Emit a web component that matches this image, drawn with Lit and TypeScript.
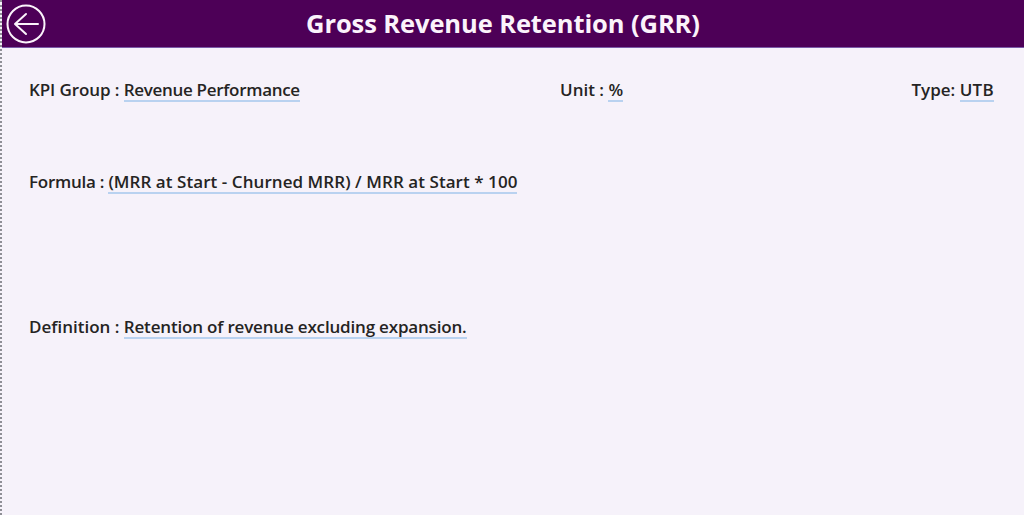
import { LitElement, html, css } from "lit";
import { customElement } from "lit/decorators.js";

@customElement("app-root")
export class AppRoot extends LitElement {
  static styles = css`
    :host {
      display: block;
      width: 1024px;
      height: 515px;
      overflow: hidden;
      font-family: "Open Sans", "Noto Sans", sans-serif;
      color: #252423;
      background: #f6f2fa;
    }
    .page {
      height: 515px;
      display: flex;
      flex-direction: column;
      border-left: 2px dotted #8f8f96;
      box-sizing: border-box;
    }
    .bar {
      height: 48px;
      box-sizing: border-box;
      background: #4d0057;
      border-bottom: 1px solid #7a5aa8;
      display: grid;
      grid-template-columns: 44px 1fr 44px;
      align-items: center;
      padding-left: 4px;
    }
    .back {
      width: 40px;
      height: 40px;
      display: block;
    }
    h1 {
      margin: 0;
      font-size: 25.5px;
      font-weight: 700;
      color: #fbf3fb;
      text-align: center;
      letter-spacing: -0.1px;
      padding-right: 24px;
      padding-bottom: 1px;
    }
    .body {
      flex: 1;
      padding: 31px 30px 0 27px;
      display: flex;
      flex-direction: column;
      font-size: 17px;
      font-weight: 600;
    }
    .row {
      display: grid;
      grid-template-columns: 531px 1fr auto;
      line-height: 21px;
      height: 23px;
    }
    .row.single { display: block; }
    .row.formula { margin-top: 69px; }
    .row.definition { margin-top: 122px; }
    .item { white-space: nowrap; }
    .val {
      display: inline-block;
      border-bottom: 2px solid #b9d2f0;
    }
    .kpi { letter-spacing: -0.1px; }
    .flabel { letter-spacing: -0.25px; }
    .group { letter-spacing: -0.3px; }
    .form { letter-spacing: 0.06px; }
    .def { letter-spacing: -0.18px; }
    .type { letter-spacing: 0.3px; }
  `;

  render() {
    return html`
      <div class="page">
        <header class="bar">
          <svg class="back" viewBox="0 0 40 40" fill="none" stroke="#fbf3fb" stroke-width="2" stroke-linecap="round" stroke-linejoin="round">
            <circle cx="20" cy="20" r="18.5"></circle>
            <path d="M9 20H32M20 10 9 20 20 30"></path>
          </svg>
          <h1>Gross Revenue Retention (GRR)</h1>
          <span></span>
        </header>
        <main class="body">
          <div class="row">
            <span class="item"><span class="kpi">KPI Group : </span><span class="val group">Revenue Performance</span></span>
            <span class="item">Unit : <span class="val">%</span></span>
            <span class="item">Type: <span class="val type">UTB</span></span>
          </div>
          <div class="row single formula">
            <span class="item"><span class="flabel">Formula : </span><span class="val form">(MRR at Start - Churned MRR) / MRR at Start * 100</span></span>
          </div>
          <div class="row single definition">
            <span class="item">Definition : <span class="val def">Retention of revenue excluding expansion.</span></span>
          </div>
        </main>
      </div>
    `;
  }
}
